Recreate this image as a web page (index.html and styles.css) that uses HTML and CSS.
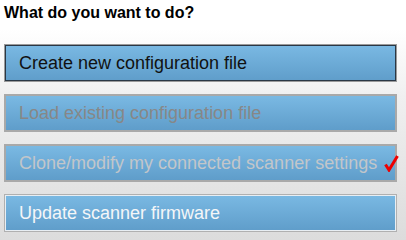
FILE: index.html
```html
<!DOCTYPE html>
<html lang="en">
<head>
    <meta charset="UTF-8">
    <title>Scanner configuration</title>
    <link rel="stylesheet" href="styles.css">
</head>
<body>
    <h1>What do you want to do?</h1>
    <div class="choices">
        <button class="choice selected">Create new configuration file</button>
        <button class="choice disabled">Load existing configuration file</button>
        <button class="choice dimmed">Clone/modify my connected scanner settings<svg class="check" width="15" height="18" viewBox="0 0 15 18"><path d="M1.5 10.5 L5 16 L13.5 2" fill="none" stroke="#ee0000" stroke-width="3" stroke-linejoin="miter"/></svg></button>
        <button class="choice hover">Update scanner firmware</button>
    </div>
</body>
</html>
```

FILE: styles.css
```css
html {
    height: 100%;
}
body {
    margin: 0;
    padding: 0 9px 0 4px;
    min-height: 100%;
    background: linear-gradient(#ffffff 12%, #f0f0f0 40%, #dcdcdc 100%);
    font-family: 'Liberation Sans', Arial, sans-serif;
}
h1 {
    font-size: 16px;
    line-height: 18px;
    margin: 4px 0 22px;
    color: #000;
}
.choices {
    display: flex;
    flex-direction: column;
    gap: 12px;
}
.choice {
    display: flex;
    align-items: center;
    height: 38px;
    box-sizing: border-box;
    padding: 0 12px 0 13px;
    font-family: 'Liberation Sans', Arial, sans-serif;
    font-size: 18px;
    text-align: left;
    white-space: nowrap;
    overflow: visible;
    background: linear-gradient(#7ab9e3, #5f9dca);
    border: 2px solid #a9a9a9;
    border-radius: 0;
    color: #f4f4f4;
}
.selected {
    border: 1px solid #9a9a9a;
    box-shadow: inset 0 0 0 1px #2a3744;
    color: #111;
    padding-left: 14px;
}
.disabled {
    color: #878787;
}
.dimmed {
    color: #c2c6ca;
}
.hover {
    border: 1px solid #b0b0b0;
    box-shadow: inset 0 0 0 1px #e8eef3;
    color: #f4f6f8;
    padding-left: 14px;
}
.check {
    flex-shrink: 0;
    margin-left: 7px;
    margin-top: 0;
}
```
